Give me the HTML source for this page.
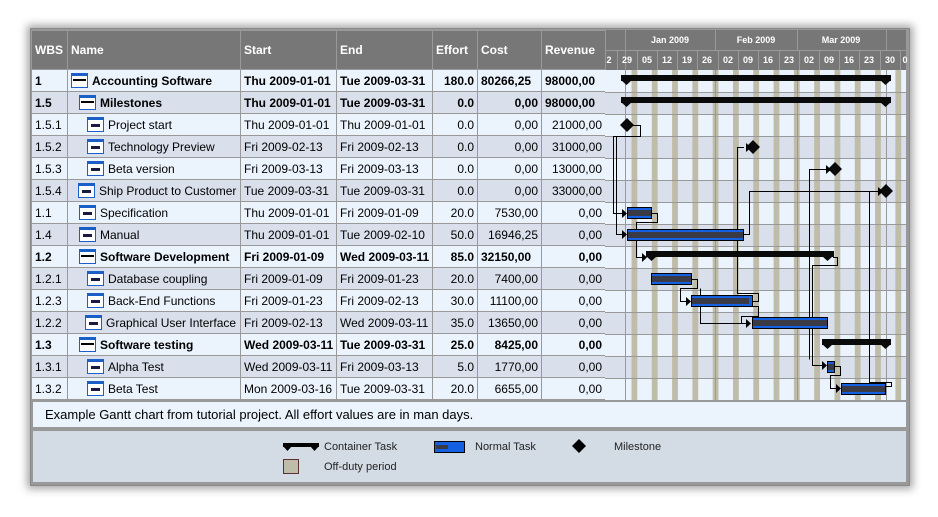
<!DOCTYPE html>
<html><head><meta charset="utf-8"><style>
body{margin:0;width:938px;height:517px;background:#fff;position:relative;overflow:hidden;font-family:"Liberation Sans",sans-serif}
#frame{position:absolute;left:30px;top:28px;width:878px;height:456px;border:1px solid #888;box-shadow:0 0 8px 3px rgba(0,0,0,.35);background:#999}
table{position:absolute;left:31px;top:30px;border-collapse:collapse;font-size:12px;table-layout:fixed}
td,th{border:1px solid #999;padding:0 0 0 3px;height:21px;white-space:nowrap;overflow:hidden}
th{background:#777;color:#fff;text-align:left;height:38px;font-weight:bold}
tr.a td{background:#ebf3fd}tr.b td{background:#d9e0eb}
tr.bd td{font-weight:bold}
td.r{text-align:right;padding-right:3px}
.ic{display:inline-block;width:15px;height:11px;border:1px solid #1a5fc8;border-top-width:3px;background:#fff;vertical-align:-3px;margin-right:4px;position:relative}
.ic:after{content:"";position:absolute;left:3px;top:4px;width:9px;height:3px;background:#1a1a40}
.ic.c:after{left:1px;top:3px;width:13px;height:2px;background:#000}
#cap{position:absolute;left:33px;top:402px;width:873px;height:25px;background:#ebf3fd;font-size:13px;line-height:26px;padding-left:12px;box-sizing:border-box}
#leg{position:absolute;left:33px;top:431px;width:873px;height:51px;background:#d3dce5;font-size:11px;color:#222}
#leg span{position:absolute}
</style></head><body>
<div id="frame"></div>
<table>
<colgroup><col style="width:36px"><col style="width:173px"><col style="width:96px"><col style="width:96px"><col style="width:45px"><col style="width:64px"><col style="width:64px"></colgroup>
<tr><th>WBS</th><th>Name</th><th>Start</th><th>End</th><th>Effort</th><th>Cost</th><th>Revenue</th></tr>
<tr class="a bd"><td>1</td><td style="padding-left:3px"><i class="ic c"></i>Accounting Software</td><td>Thu 2009-01-01</td><td>Tue 2009-03-31</td><td class="r">180.0</td><td>80266,25</td><td>98000,00</td></tr>
<tr class="b bd"><td>1.5</td><td style="padding-left:11px"><i class="ic c"></i>Milestones</td><td>Thu 2009-01-01</td><td>Tue 2009-03-31</td><td class="r">0.0</td><td class="r">0,00</td><td>98000,00</td></tr>
<tr class="a"><td>1.5.1</td><td style="padding-left:19px"><i class="ic"></i>Project start</td><td>Thu 2009-01-01</td><td>Thu 2009-01-01</td><td class="r">0.0</td><td class="r">0,00</td><td class="r">21000,00</td></tr>
<tr class="b"><td>1.5.2</td><td style="padding-left:19px"><i class="ic"></i>Technology Preview</td><td>Fri 2009-02-13</td><td>Fri 2009-02-13</td><td class="r">0.0</td><td class="r">0,00</td><td class="r">31000,00</td></tr>
<tr class="a"><td>1.5.3</td><td style="padding-left:19px"><i class="ic"></i>Beta version</td><td>Fri 2009-03-13</td><td>Fri 2009-03-13</td><td class="r">0.0</td><td class="r">0,00</td><td class="r">13000,00</td></tr>
<tr class="b"><td>1.5.4</td><td style="padding-left:10px"><i class="ic"></i>Ship Product to Customer</td><td>Tue 2009-03-31</td><td>Tue 2009-03-31</td><td class="r">0.0</td><td class="r">0,00</td><td class="r">33000,00</td></tr>
<tr class="a"><td>1.1</td><td style="padding-left:11px"><i class="ic"></i>Specification</td><td>Thu 2009-01-01</td><td>Fri 2009-01-09</td><td class="r">20.0</td><td class="r">7530,00</td><td class="r">0,00</td></tr>
<tr class="b"><td>1.4</td><td style="padding-left:11px"><i class="ic"></i>Manual</td><td>Thu 2009-01-01</td><td>Tue 2009-02-10</td><td class="r">50.0</td><td class="r">16946,25</td><td class="r">0,00</td></tr>
<tr class="a bd"><td>1.2</td><td style="padding-left:11px"><i class="ic c"></i>Software Development</td><td>Fri 2009-01-09</td><td>Wed 2009-03-11</td><td class="r">85.0</td><td>32150,00</td><td class="r">0,00</td></tr>
<tr class="b"><td>1.2.1</td><td style="padding-left:19px"><i class="ic"></i>Database coupling</td><td>Fri 2009-01-09</td><td>Fri 2009-01-23</td><td class="r">20.0</td><td class="r">7400,00</td><td class="r">0,00</td></tr>
<tr class="a"><td>1.2.3</td><td style="padding-left:19px"><i class="ic"></i>Back-End Functions</td><td>Fri 2009-01-23</td><td>Fri 2009-02-13</td><td class="r">30.0</td><td class="r">11100,00</td><td class="r">0,00</td></tr>
<tr class="b"><td>1.2.2</td><td style="padding-left:17px"><i class="ic"></i>Graphical User Interface</td><td>Fri 2009-02-13</td><td>Wed 2009-03-11</td><td class="r">35.0</td><td class="r">13650,00</td><td class="r">0,00</td></tr>
<tr class="a bd"><td>1.3</td><td style="padding-left:11px"><i class="ic c"></i>Software testing</td><td>Wed 2009-03-11</td><td>Tue 2009-03-31</td><td class="r">25.0</td><td class="r">8425,00</td><td class="r">0,00</td></tr>
<tr class="b"><td>1.3.1</td><td style="padding-left:19px"><i class="ic"></i>Alpha Test</td><td>Wed 2009-03-11</td><td>Fri 2009-03-13</td><td class="r">5.0</td><td class="r">1770,00</td><td class="r">0,00</td></tr>
<tr class="a"><td>1.3.2</td><td style="padding-left:19px"><i class="ic"></i>Beta Test</td><td>Mon 2009-03-16</td><td>Tue 2009-03-31</td><td class="r">20.0</td><td class="r">6655,00</td><td class="r">0,00</td></tr>
</table>
<svg width="938" height="517" style="position:absolute;left:0;top:0" font-family="Liberation Sans,sans-serif">
<rect x="605" y="30" width="301" height="40" fill="#777"/>
<g fill="#ebf3fd"><rect x="605" y="70" width="301" height="22"/><rect x="605" y="114" width="301" height="22"/><rect x="605" y="158" width="301" height="22"/><rect x="605" y="202" width="301" height="22"/><rect x="605" y="246" width="301" height="22"/><rect x="605" y="290" width="301" height="22"/><rect x="605" y="334" width="301" height="22"/><rect x="605" y="378" width="301" height="22"/></g>
<g fill="#d9e0eb"><rect x="605" y="92" width="301" height="22"/><rect x="605" y="136" width="301" height="22"/><rect x="605" y="180" width="301" height="22"/><rect x="605" y="224" width="301" height="22"/><rect x="605" y="268" width="301" height="22"/><rect x="605" y="312" width="301" height="22"/><rect x="605" y="356" width="301" height="22"/></g>
<g fill="#bfbcaa"><rect x="631.5" y="70" width="5.8" height="330"/><rect x="651.8" y="70" width="5.8" height="330"/><rect x="672.1" y="70" width="5.8" height="330"/><rect x="692.4" y="70" width="5.8" height="330"/><rect x="712.7" y="70" width="5.8" height="330"/><rect x="733" y="70" width="5.8" height="330"/><rect x="753.3" y="70" width="5.8" height="330"/><rect x="773.6" y="70" width="5.8" height="330"/><rect x="793.9" y="70" width="5.8" height="330"/><rect x="814.2" y="70" width="5.8" height="330"/><rect x="834.5" y="70" width="5.8" height="330"/><rect x="854.8" y="70" width="5.8" height="330"/><rect x="875.1" y="70" width="5.8" height="330"/><rect x="895.4" y="70" width="5.8" height="330"/></g>
<g stroke="#999" stroke-width="1"><path d="M605 92.5H906M605 114.5H906M605 136.5H906M605 158.5H906M605 180.5H906M605 202.5H906M605 224.5H906M605 246.5H906M605 268.5H906M605 290.5H906M605 312.5H906M605 334.5H906M605 356.5H906M605 378.5H906M605 400.5H906"/><path d="M625.5 70V400M715.5 70V400M797.5 70V400M886.5 70V400"/>
<path d="M605.5 30V70M625.5 30V70M715.5 30V50M797.5 30V50M886.5 30V50M605 50.5H906M617.5 50V70M637.5 50V70M657.5 50V70M677.5 50V70M697.5 50V70M718.5 50V70M738.5 50V70M758.5 50V70M779.5 50V70M799.5 50V70M819.5 50V70M839.5 50V70M859.5 50V70M880.5 50V70M900.5 50V70"/></g>
<g fill="#fff" font-size="9" font-weight="bold" text-anchor="middle"><text x="670" y="43">Jan 2009</text><text x="756" y="43">Feb 2009</text><text x="841" y="43">Mar 2009</text>
<text x="609" y="63">2</text><text x="627" y="63">29</text><text x="647" y="63">05</text><text x="667" y="63">12</text><text x="687" y="63">19</text><text x="707" y="63">26</text><text x="728" y="63">02</text><text x="748" y="63">09</text><text x="768" y="63">16</text><text x="789" y="63">23</text><text x="809" y="63">02</text><text x="829" y="63">09</text><text x="849" y="63">16</text><text x="869" y="63">23</text><text x="890" y="63">30</text><text x="905" y="63">0</text></g>
<g fill="#0a0a0a">
<rect x="621" y="75" width="270" height="6"/><path d="M621 80h11l-5.5 5zM880 80h11l-5.5 5z"/>
<rect x="621" y="97" width="270" height="6"/><path d="M621 102h11l-5.5 5zM880 102h11l-5.5 5z"/>
<rect x="646" y="251" width="188" height="6"/><path d="M646 256h11l-5.5 5zM822 256h11l-5.5 5z"/>
<rect x="822" y="339" width="69" height="6"/><path d="M822 344h11l-5.5 5zM880 344h11l-5.5 5z"/>
<path d="M627 118l7 7-7 7-7-7zM753 140l7 7-7 7-7-7zM835 162l7 7-7 7-7-7zM886 184l7 7-7 7-7-7z"/>
</g>
<g fill="none" stroke="#000" stroke-width="1">
<path d="M632 125.5H640.5V136.5H613.5V213.5H622M616.5 136.5V234.5H622"/>
<path d="M652 213.5H657.5V222.5H636.5V257.5H642"/>
<path d="M744 234.5H749.5V191.5H878M886 386.5H891.5V382.5H869.5V191.5"/>
<path d="M753 301.5H758.5V293.5H737.5V147.5H744"/>
<path d="M692 279.5H697.5V288.5H680.5V301.5H686M700.5 288.5V323.5H746"/>
<path d="M753 306.5H758.5V316.5H741.5V323.5"/>
<path d="M833 257.5H837.5V265.5H812.5V365.5H822"/>
<path d="M835 366.5H840.5V375.5H830.5V388.5H836M809.5 359.5V169.5H826"/>
</g>
<g fill="#000"><path d="M622 209v9l5-4.5zM622 230v9l5-4.5zM642 253v9l5-4.5zM746 143v9l5-4.5zM826 165v9l5-4.5zM878 187v9l5-4.5zM686 297v9l5-4.5zM746 319v9l5-4.5zM822 361v9l5-4.5zM836 384v9l5-4.5z"/></g>
<g stroke="#000" stroke-width="1" fill="#1560e0">
<rect x="627.5" y="207.5" width="24" height="11"/><rect x="627.5" y="229.5" width="116" height="11"/><rect x="651.5" y="273.5" width="40" height="11"/><rect x="691.5" y="295.5" width="61" height="11"/><rect x="752.5" y="317.5" width="75" height="11"/><rect x="827.5" y="361.5" width="7" height="11"/><rect x="841.5" y="383.5" width="44" height="11"/></g>
<g fill="#393a45"><rect x="628" y="210" width="23" height="6"/><rect x="628" y="232" width="115" height="6"/><rect x="652" y="276" width="39" height="6"/><rect x="692" y="298" width="57" height="6"/><rect x="753" y="320" width="74" height="6"/><rect x="828" y="364" width="6" height="6"/><rect x="842" y="386" width="43" height="6"/></g>
</svg>
<div id="cap">Example Gantt chart from tutorial project. All effort values are in man days.</div>
<div id="leg">
<svg width="873" height="51" style="position:absolute;left:0;top:0"><rect x="250" y="12" width="36" height="4" fill="#000"/><path d="M250 15h9l-4.5 5zM277 15h9l-4.5 5z" fill="#000"/><rect x="401.5" y="10.5" width="30" height="11" fill="#1560e0" stroke="#000"/><rect x="403" y="14" width="12" height="4" fill="#393a45"/><path d="M546 8l7 7-7 7-7-7z" fill="#000"/><rect x="250.5" y="28.5" width="15" height="14" fill="#bfbcaa" stroke="#5a3030"/></svg>
<span style="left:291px;top:10px">Container Task</span><span style="left:442px;top:10px">Normal Task</span><span style="left:581px;top:10px">Milestone</span><span style="left:291px;top:30px">Off-duty period</span>
</div>
</body></html>
